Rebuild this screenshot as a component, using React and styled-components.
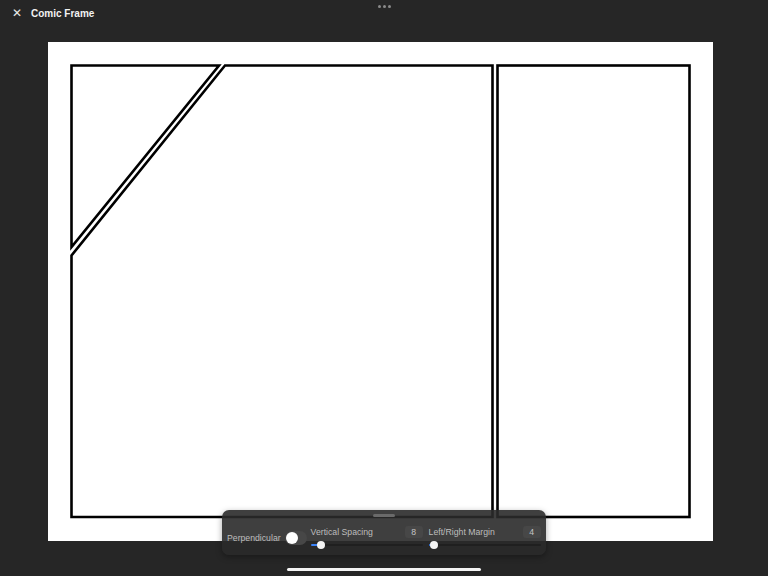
import React from "react";
import styled, { createGlobalStyle } from "styled-components";

const Global = createGlobalStyle`
  html, body { margin: 0; padding: 0; background: #262626; }
  body { font-family: "Liberation Sans", Arial, sans-serif; }
`;

const Screen = styled.div`
  position: relative;
  width: 768px;
  height: 576px;
  background: #262626;
  overflow: hidden;
  display: flex;
  flex-direction: column;
`;

const TopBar = styled.div`
  height: 26px;
  display: flex;
  align-items: center;
  padding-left: 12px;
  gap: 9px;
  position: relative;
`;

const CloseBtn = styled.span`
  color: #e8e8e8;
  font-size: 12px;
  width: 10px;
  display: flex;
  align-items: center;
  justify-content: center;
`;

const Title = styled.span`
  color: #f2f2f2;
  font-size: 10px;
  font-weight: 700;
`;

const MoreDots = styled.div`
  position: absolute;
  left: 378px;
  top: 5px;
  display: flex;
  gap: 2px;
`;

const Dot = styled.span`
  width: 3px;
  height: 3px;
  border-radius: 50%;
  background: #8a8a8a;
`;

const Stage = styled.div`
  flex: 1;
  padding: 16px 0 0 48px;
`;

const Page = styled.div`
  width: 665px;
  height: 499px;
  background: #ffffff;
`;

const Panel = styled.div`
  position: absolute;
  left: 222px;
  top: 510px;
  width: 324px;
  height: 45px;
  border-radius: 7px;
  background: rgba(42, 42, 42, 0.9);
  box-shadow: 0 2px 6px rgba(0, 0, 0, 0.35);
  box-sizing: border-box;
  display: flex;
  flex-direction: column;
`;

const Grabber = styled.div`
  align-self: center;
  margin-top: 4px;
  width: 22px;
  height: 3px;
  border-radius: 2px;
  background: #6a6a6a;
`;

const PanelBody = styled.div`
  flex: 1;
  display: flex;
  align-items: center;
  padding: 3px 5px 0 5px;
`;

const Label = styled.span`
  color: #bdbdbd;
  font-size: 8.7px;
  white-space: nowrap;
`;

const Toggle = styled.div`
  margin-left: 4px;
  width: 22px;
  height: 14px;
  border-radius: 7px;
  background: #474747;
  display: flex;
  align-items: center;
  padding-left: 1px;
  box-sizing: border-box;
`;

const Knob = styled.span`
  width: 12px;
  height: 12px;
  border-radius: 50%;
  background: #ffffff;
`;

const Group = styled.div`
  width: 112px;
  margin-left: ${(p) => p.$ml}px;
  display: flex;
  flex-direction: column;
  gap: 3px;
  margin-top: -4px;
`;

const GroupHead = styled.div`
  display: flex;
  align-items: center;
  justify-content: space-between;
`;

const ValueBox = styled.span`
  width: 18px;
  height: 12px;
  border-radius: 3px;
  background: #474747;
  color: #c4c4c4;
  font-size: 8.7px;
  display: flex;
  align-items: center;
  justify-content: center;
`;

const Track = styled.div`
  position: relative;
  height: 2px;
  border-radius: 1px;
  background: #1f1f1f;
  margin-top: 3px;
`;

const Fill = styled.div`
  position: absolute;
  left: 0;
  top: 0;
  height: 2px;
  border-radius: 1px;
  background: #3b82f6;
`;

const Thumb = styled.span`
  position: absolute;
  top: -3px;
  width: 8px;
  height: 8px;
  margin-left: -4px;
  border-radius: 50%;
  background: #f4f4f4;
`;

const HomeBar = styled.div`
  position: absolute;
  left: 287px;
  top: 568px;
  width: 194px;
  height: 3px;
  border-radius: 2px;
  background: #f5f5f5;
`;

function Slider({ label, value, pos }) {
  return (
    <>
      <GroupHead>
        <Label>{label}</Label>
        <ValueBox>{value}</ValueBox>
      </GroupHead>
      <Track>
        <Fill style={{ width: pos }} />
        <Thumb style={{ left: pos }} />
      </Track>
    </>
  );
}

export default function App() {
  return (
    <Screen>
      <Global />
      <TopBar>
        <CloseBtn>✕</CloseBtn>
        <Title>Comic Frame</Title>
        <MoreDots>
          <Dot />
          <Dot />
          <Dot />
        </MoreDots>
      </TopBar>
      <Stage>
        <Page>
          <svg width="665" height="499" viewBox="0 0 665 499">
            <g fill="none" stroke="#000" strokeWidth="2.6" strokeLinejoin="miter">
              <polygon points="23.5,23.5 171,23.5 23.5,205" />
              <polygon points="177,23.5 444.5,23.5 444.5,475 23.5,475 23.5,213.5" />
              <rect x="449.5" y="23.5" width="192" height="451.5" />
            </g>
          </svg>
        </Page>
      </Stage>
      <Panel>
        <Grabber />
        <PanelBody>
          <Label>Perpendicular</Label>
          <Toggle>
            <Knob />
          </Toggle>
          <Group $ml={4}>
            <Slider label="Vertical Spacing" value="8" pos={10} />
          </Group>
          <Group $ml={6}>
            <Slider label="Left/Right Margin" value="4" pos={5} />
          </Group>
        </PanelBody>
      </Panel>
      <HomeBar />
    </Screen>
  );
}
